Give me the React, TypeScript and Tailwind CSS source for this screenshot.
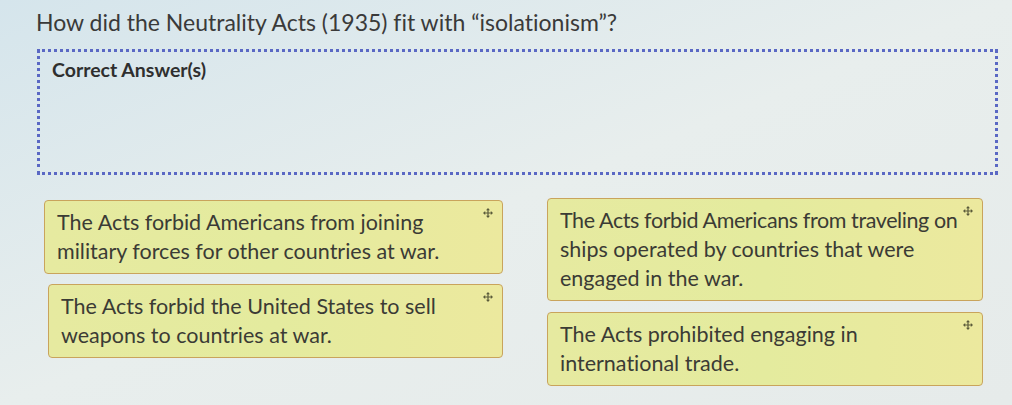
import React from "react";

const MoveIcon = () => (
  <svg width="10" height="10" viewBox="0 0 10 10" className="absolute right-[9px] top-[7px] text-[#5a5a3a]" fill="currentColor">
    <path d="M5 0 L7 2.2 H5.6 V4.4 H7.8 V3 L10 5 L7.8 7 V5.6 H5.6 V7.8 H7 L5 10 L3 7.8 H4.4 V5.6 H2.2 V7 L0 5 L2.2 3 V4.4 H4.4 V2.2 H3 Z" />
  </svg>
);

const Card = ({ text, className = "" }: { text: React.ReactNode; className?: string }) => (
  <div
    className={
      "relative whitespace-nowrap rounded-[4px] border border-[#c9a45c] bg-gradient-to-r from-[#e6eaa0] via-[#e4eb9e] to-[#ece99e] py-[7px] pl-[12px] pr-[12px] text-[21.5px] leading-[29px] text-[#3b3b35] " +
      className
    }
  >
    {text}
    <MoveIcon />
  </div>
);

export default function App() {
  return (
    <div
      className="h-[405px] w-[1012px] overflow-hidden bg-gradient-to-br from-[#d5e5ec] via-[#e8eeed] to-[#e6ebea] text-[#333] [font-variant-ligatures:none]"
      style={{ fontFamily: "Lato, 'Liberation Sans', sans-serif" }}
    >
      <div className="pl-[36px] pt-[7px] text-[23px] leading-[31px] text-[#3a3a3a]">
        How did the Neutrality Acts (1935) fit with “isolationism”?
      </div>
      <div className="ml-[37px] mr-[14px] mt-[11px] h-[126px] border-[3px] border-dotted border-[#5a68c4] pl-[12px] pt-[5px]">
        <div className="text-[19.5px] font-bold leading-[26px] text-[#2f2f2f]">Correct Answer(s)</div>
      </div>
      <div className="mt-[23px] flex gap-[44px] pl-[44px]">
        <div className="flex w-[459px] flex-col gap-[10px] pt-[2px]">
          <Card text={<>The Acts forbid Americans from joining<br />military forces for other countries at war.</>} />
          <Card className="ml-[4px]" text={<>The Acts forbid the United States to sell<br />weapons to countries at war.</>} />
        </div>
        <div className="flex w-[436px] flex-col gap-[11px]">
          <Card text={<><span className="tracking-[-0.4px]">The Acts forbid Americans from traveling on</span><br />ships operated by countries that were<br />engaged in the war.</>} />
          <Card text={<>The Acts prohibited engaging in<br />international trade.</>} />
        </div>
      </div>
    </div>
  );
}
